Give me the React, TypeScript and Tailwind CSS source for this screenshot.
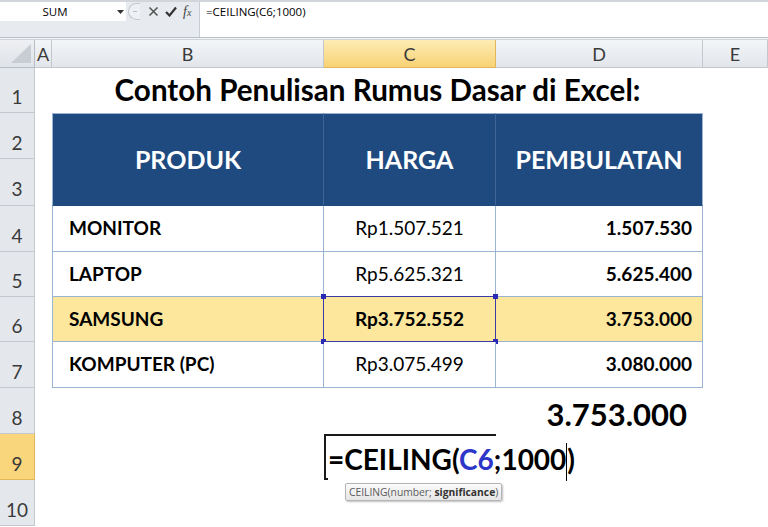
import React from "react";

type Row = {
  name: string;
  harga: string;
  hasil: string;
  rowCls: string;
  highlight?: boolean;
};

const rows: Row[] = [
  { name: "MONITOR", harga: "Rp1.507.521", hasil: "1.507.530", rowCls: "row-start-5" },
  { name: "LAPTOP", harga: "Rp5.625.321", hasil: "5.625.400", rowCls: "row-start-6" },
  { name: "SAMSUNG", harga: "Rp3.752.552", hasil: "3.753.000", rowCls: "row-start-7", highlight: true },
  { name: "KOMPUTER (PC)", harga: "Rp3.075.499", hasil: "3.080.000", rowCls: "row-start-8" },
];

const rowHeads = [
  { n: 1, cls: "row-start-2" },
  { n: 2, cls: "row-start-3" },
  { n: 3, cls: "row-start-4" },
  { n: 4, cls: "row-start-5" },
  { n: 5, cls: "row-start-6" },
  { n: 6, cls: "row-start-7" },
  { n: 7, cls: "row-start-8" },
  { n: 8, cls: "row-start-9" },
  { n: 9, cls: "row-start-10", active: true },
  { n: 10, cls: "row-start-11" },
];

const colHeads = [
  { label: "A", cls: "col-start-2" },
  { label: "B", cls: "col-start-3" },
  { label: "C", cls: "col-start-4", active: true },
  { label: "D", cls: "col-start-5" },
  { label: "E", cls: "col-start-6" },
];

function FormulaBar() {
  return (
    <div className="flex h-[37px] border-t-2 border-[#d2d6db] bg-[#e7eaee] font-['Open_Sans',sans-serif] text-[11.5px] text-black">
      <div className="flex w-[199px] flex-col">
        <div className="flex h-[19px]">
          {/* name box */}
          <div className="relative flex w-[126px] items-center bg-white">
            <span className="w-[110px] text-center leading-none">SUM</span>
            <svg className="absolute left-[117px] top-[8px]" width="7" height="4" viewBox="0 0 7 4">
              <path d="M0 0h7L3.5 4z" fill="#333" />
            </svg>
          </div>
          {/* buttons */}
          <div className="flex flex-1 items-center">
            <div className="ml-[2px] flex h-[17px] w-[12px] items-center justify-center rounded-l-full border-y border-l border-[#c4c9cf] bg-[#eef0f3]">
              <span className="h-px w-[4px] bg-[#b9bec5]" />
            </div>
            <svg className="ml-[8px]" width="11" height="11" viewBox="0 0 11 11">
              <path d="M1.5 1.5l8 8M9.5 1.5l-8 8" stroke="#555" strokeWidth="1.6" />
            </svg>
            <svg className="ml-[6px]" width="12" height="11" viewBox="0 0 12 11">
              <path d="M1 6l3.5 3.5L11 1.5" stroke="#333" strokeWidth="2.2" fill="none" />
            </svg>
            <span className="ml-[6px] font-['Liberation_Serif',serif] text-[14px] italic leading-none text-[#444]">
              f<span className="text-[10px]">x</span>
            </span>
          </div>
        </div>
        <div className="flex-1" />
      </div>
      <div className="flex-1 border-l border-[#c9ced4] bg-white pl-[6px] pt-[4px] leading-none">
        =CEILING(C6;1000)
      </div>
    </div>
  );
}

function Sheet() {
  const cellBorder = "border-r border-b border-[#9cb4d3]";
  return (
    <div className="grid grid-cols-[35px_17px_272px_172px_207px_1fr] grid-rows-[28px_45px_46px_47px_46px_45px_45px_46px_46px_46px_46px] font-['Lato',sans-serif]">
      {/* corner */}
      <div className="relative col-start-1 row-start-1 border-r border-b border-[#b7bdc5] bg-linear-to-b from-[#eef0f3] to-[#dfe3e8]">
        <svg className="absolute right-[3px] bottom-[4px]" width="20" height="19" viewBox="0 0 20 19">
          <path d="M20 0v19H0z" fill="#c8cdd3" />
        </svg>
      </div>

      {colHeads.map((c) => (
        <div
          key={c.label}
          className={`${c.cls} row-start-1 flex items-center justify-center border-r border-b text-[18px] leading-none text-[#3a3a3a] ${
            c.active
              ? "border-[#e2b75a] bg-linear-to-b from-[#fdecb4] to-[#f8d274]"
              : "border-[#c3c8cf] bg-linear-to-b from-[#f3f5f7] to-[#e2e6eb]"
          }`}
        >
          {c.label}
        </div>
      ))}

      {rowHeads.map((r) => (
        <div
          key={r.n}
          className={`${r.cls} col-start-1 flex items-center justify-center border-r border-b pt-[13px] text-[19px] leading-none text-[#3a3a3a] ${
            r.active ? "border-[#e2b75a] bg-[#f9d67b]" : "border-[#c3c8cf] bg-[#e4e8ed]"
          }`}
        >
          {r.n}
        </div>
      ))}

      {/* title */}
      <div className="col-span-3 col-start-3 row-start-2 flex items-center justify-center text-[29.6px] font-bold text-black">
        Contoh Penulisan Rumus Dasar di Excel:
      </div>

      {/* table header */}
      <div className="col-start-3 row-span-2 row-start-3 flex items-center justify-center border-t border-l border-r border-b border-t-[#9cb4d3] border-l-[#9cb4d3] border-r-[#3f6496] border-b-[#1f4a80] bg-[#1f4a80] text-[25px] font-bold text-white">
        PRODUK
      </div>
      <div className="col-start-4 row-span-2 row-start-3 flex items-center justify-center border-t border-r border-b border-t-[#9cb4d3] border-r-[#3f6496] border-b-[#1f4a80] bg-[#1f4a80] text-[25px] font-bold text-white">
        HARGA
      </div>
      <div className="col-start-5 row-span-2 row-start-3 flex items-center justify-center border-t border-r border-b border-t-[#9cb4d3] border-r-[#9cb4d3] border-b-[#1f4a80] bg-[#1f4a80] text-[25px] font-bold text-white">
        PEMBULATAN
      </div>

      {/* table body */}
      {rows.map((r) => (
        <React.Fragment key={r.name}>
          <div
            className={`${r.rowCls} col-start-3 flex items-center border-l pl-[16px] text-[19px] font-bold text-black ${cellBorder} ${
              r.highlight ? "bg-[#fde79d]" : "bg-white"
            }`}
          >
            {r.name}
          </div>
          <div
            className={`${r.rowCls} relative col-start-4 flex items-center justify-center text-[19px] text-black ${cellBorder} ${
              r.highlight ? "bg-[#fde79d] font-bold" : "bg-white"
            }`}
          >
            {r.harga}
            {r.highlight && (
              <>
                <div className="absolute -top-px -left-px right-[-1px] bottom-[-1px] border border-[#3a3aa6]" />
                <span className="absolute -top-[3px] -left-[3px] h-[5px] w-[5px] bg-[#2a2ab4]" />
                <span className="absolute -top-[3px] -right-[3px] h-[5px] w-[5px] bg-[#2a2ab4]" />
                <span className="absolute -bottom-[3px] -left-[3px] h-[5px] w-[5px] bg-[#2a2ab4]" />
                <span className="absolute -right-[3px] -bottom-[3px] h-[5px] w-[5px] bg-[#2a2ab4]" />
              </>
            )}
          </div>
          <div
            className={`${r.rowCls} col-start-5 flex items-center justify-end pr-[10px] text-[19px] font-bold text-black ${cellBorder} ${
              r.highlight ? "bg-[#fde79d]" : "bg-white"
            }`}
          >
            {r.hasil}
          </div>
        </React.Fragment>
      ))}

      {/* row 8 result */}
      <div className="col-start-5 row-start-9 flex items-center justify-end pt-[6px] pr-[16px] text-[31px] font-bold text-black">
        3.753.000
      </div>

      {/* row 9 editing cell */}
      <div className="relative z-10 col-start-4 row-start-10 flex items-center border-y-2 border-l-2 border-[#1a1a1a] pt-[5px] pl-[2px] text-[28px] font-bold whitespace-nowrap text-black">
        <span className="bg-white">
          =CEILING(<span className="text-[#2d36c8]">C6</span>;1000
          <span className="inline-block h-[38px] w-px bg-black align-middle" />)
        </span>
        <div className="absolute top-[47px] left-[19px] rounded-[2px] border border-[#b5b5b5] bg-linear-to-b from-[#fbfbfb] to-[#e6e6e6] px-[3px] py-[2px] font-['Open_Sans',sans-serif] text-[10.3px] leading-[12px] font-normal text-[#5a5a5a] shadow-[1px_1px_2px_rgba(0,0,0,0.25)]">
          CEILING(number; <b className="text-[#333]">significance</b>)
        </div>
      </div>
    </div>
  );
}

export default function App() {
  return (
    <div className="h-[527px] w-[768px] overflow-hidden bg-white">
      <FormulaBar />
      <div className="h-[3px] border-t border-b border-t-[#b9bfc7] border-b-[#cfd3d9] bg-[#f3f4f6]" />
      <Sheet />
    </div>
  );
}
